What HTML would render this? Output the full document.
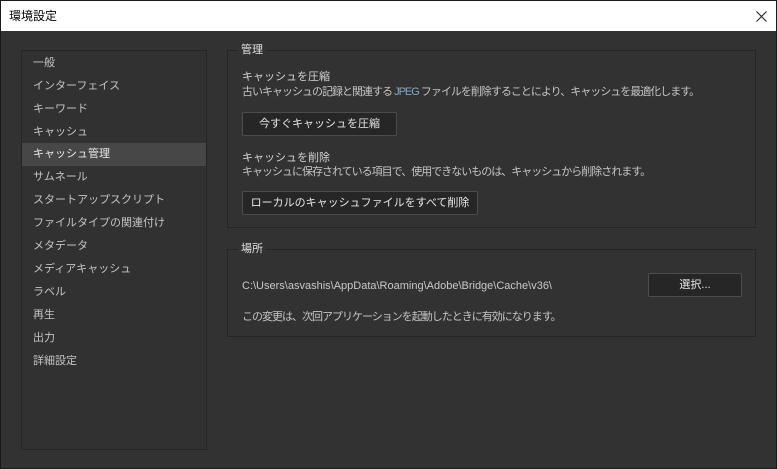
<!DOCTYPE html>
<html><head><meta charset="utf-8"><style>
*{margin:0;padding:0;box-sizing:border-box}
body{width:777px;height:469px;overflow:hidden;background:#323232;font-family:"Liberation Sans","Noto Sans CJK JP",sans-serif;font-size:11px;color:#d4d4d4;position:relative}
.frame{position:absolute;left:0;top:0;width:777px;height:469px;border:1px solid #1a1a1a}
.title{position:absolute;left:1px;top:1px;width:775px;height:30px;background:#fff;color:#000;font-size:12px;line-height:30px;padding-left:8px}
.x{position:absolute;left:755px;top:10px}
.side{position:absolute;left:21px;top:50px;width:186px;height:400px;border:1px solid #252525;background:#313131}
.side div{position:absolute;left:0;width:184px;height:23px;line-height:23px;padding-left:11px;color:#c4c4c4}
.side .sel{background:#474747;color:#e8e8e8}
.grp{position:absolute;border:1px solid #252525}
.lg{position:absolute;top:-8px;left:10px;background:#323232;padding:0 3px;line-height:14px;color:#e0e0e0}
.t{position:absolute;line-height:14px;white-space:nowrap}
.n{letter-spacing:-1px}
.btn{position:absolute;background:#262626;border:1px solid #4c4c4c;border-radius:2px;text-align:center;color:#e6e6e6;line-height:22px;white-space:nowrap}
</style></head><body>
<div class="frame"></div>
<div class="title">環境設定<svg class="x" width="11" height="11" viewBox="0 0 11 11"><path d="M0.5 0.5L10.5 10.5M10.5 0.5L0.5 10.5" stroke="#222" stroke-width="1.1"/></svg></div>
<div class="side">
<div style="top:1px">一般</div>
<div style="top:24px">インターフェイス</div>
<div style="top:47px">キーワード</div>
<div style="top:70px">キャッシュ</div>
<div class="sel" style="top:92px">キャッシュ管理</div>
<div style="top:115px">サムネール</div>
<div style="top:138px">スタートアップスクリプト</div>
<div style="top:161px">ファイルタイプの関連付け</div>
<div style="top:184px">メタデータ</div>
<div style="top:207px">メディアキャッシュ</div>
<div style="top:230px">ラベル</div>
<div style="top:253px">再生</div>
<div style="top:276px">出力</div>
<div style="top:299px">詳細設定</div>
</div>
<div class="grp" style="left:227px;top:50px;width:529px;height:178px">
<span class="lg">管理</span>
<span class="t" style="left:14px;top:19px">キャッシュを圧縮</span>
<span class="t n" style="left:14px;top:34px;color:#c4c4c4">古いキャッシュの記録と関連する <span style="color:#7fa6c9">JPEG</span> ファイルを削除することにより、キャッシュを最適化します。</span>
<div class="btn" style="left:14px;top:61px;width:155px;height:24px">今すぐキャッシュを圧縮</div>
<span class="t" style="left:14px;top:100px">キャッシュを削除</span>
<span class="t n" style="left:14px;top:114px;color:#c4c4c4">キャッシュに保存されている項目で、使用できないものは、キャッシュから削除されます。</span>
<div class="btn" style="left:14px;top:140px;width:236px;height:24px">ローカルのキャッシュファイルをすべて削除</div>
</div>
<div class="grp" style="left:227px;top:249px;width:529px;height:88px">
<span class="lg">場所</span>
<span class="t" style="left:14px;top:29px;color:#c8c8c8">C:\Users\asvashis\AppData\Roaming\Adobe\Bridge\Cache\v36\</span>
<div class="btn" style="left:420px;top:23px;width:94px;height:24px">選択...</div>
<span class="t n" style="left:14px;top:60px;color:#c4c4c4">この変更は、次回アプリケーションを起動したときに有効になります。</span>
</div>
</body></html>
